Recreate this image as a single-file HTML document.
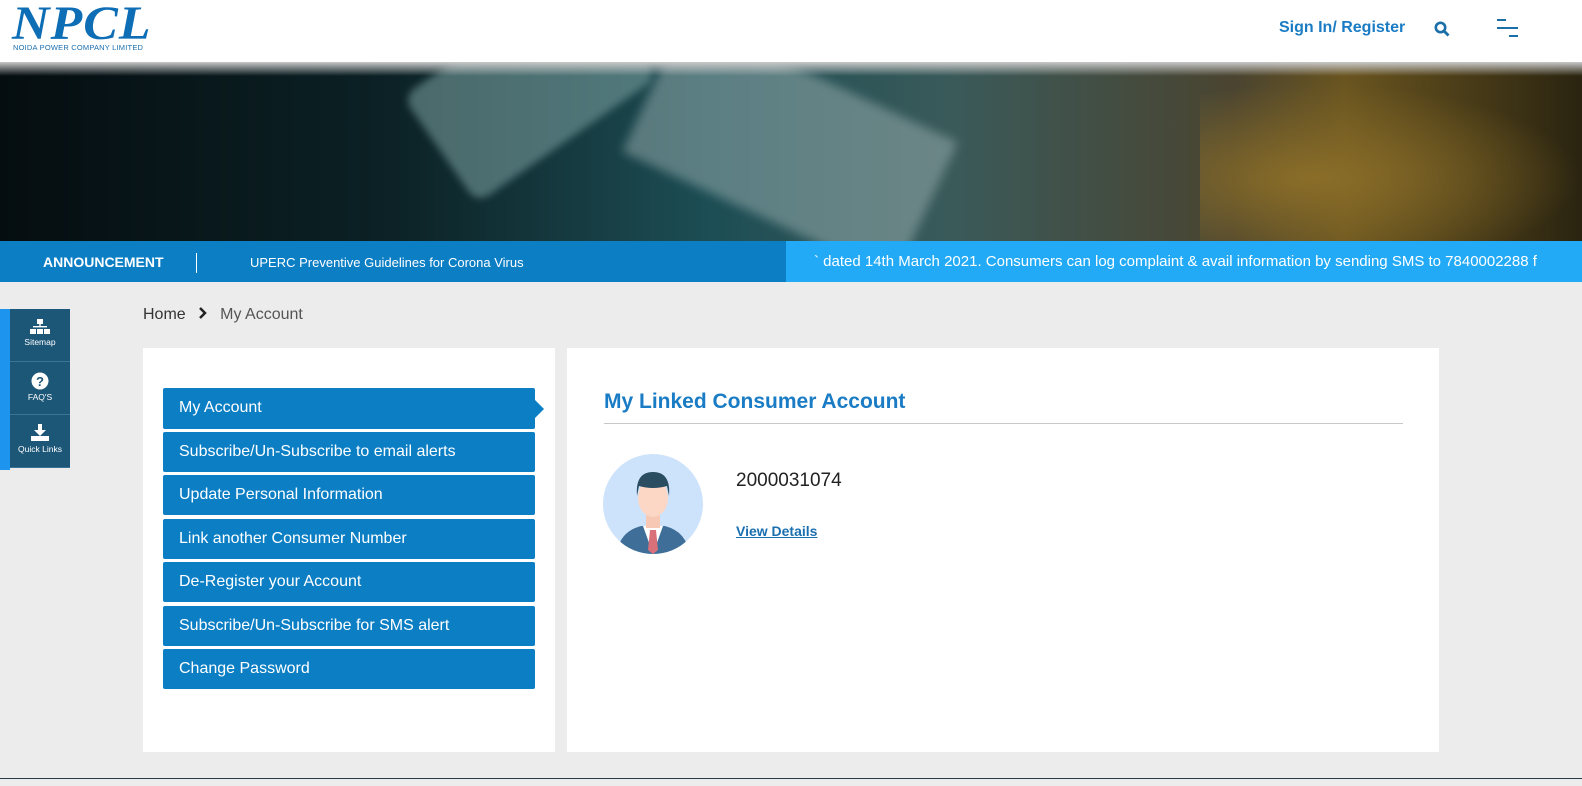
<!DOCTYPE html>
<html><head><meta charset="utf-8"><style>
*{margin:0;padding:0;box-sizing:border-box}
body{width:1582px;height:786px;overflow:hidden;background:#ececec;font-family:"Liberation Sans",sans-serif;position:relative}
.hdr{position:absolute;left:0;top:0;width:1582px;height:62px;background:#fff}
.logo{position:absolute;left:12px;top:2px;font-family:"Liberation Serif",serif;font-style:italic;font-weight:bold;font-size:48px;color:#0d6db5;letter-spacing:1px;line-height:44px;transform:scaleX(1.08);transform-origin:left}
.logosub{position:absolute;left:13px;top:43px;font-size:7.5px;color:#1a6fb0;letter-spacing:.2px}
.sign{position:absolute;left:1279px;top:19px;font-size:16px;color:#1a7cc4;font-weight:bold}
.banner{position:absolute;left:0;top:62px;width:1582px;height:179px;overflow:hidden;background:linear-gradient(90deg,#050d10 0%,#0c2226 25%,#1d4e55 45%,#3a5a5a 60%,#4a4430 78%,#6a5520 85%,#2a2410 100%)}
.ann{position:absolute;top:241px;height:41px;left:0;width:786px;background:#0b7ec4;color:#fff}
.ann2{position:absolute;top:241px;height:41px;left:786px;width:796px;background:#22aaf7;color:#fff;font-size:15px;padding:12px 0 0 28px;white-space:nowrap;overflow:hidden}
.side{position:absolute;left:0;top:309px;width:70px;height:161px}
.side .bar{position:absolute;left:0;top:0;width:10px;height:161px;background:#1d94ee}
.side .it{position:absolute;left:10px;width:60px;height:53px;background:#1d5778;color:#fff;font-size:8.5px;text-align:center;border-bottom:1px solid #3a7396}
.crumb{position:absolute;left:143px;top:306px;font-size:16px;color:#333}
.lp{position:absolute;left:143px;top:348px;width:412px;height:404px;background:#fff}
.rp{position:absolute;left:567px;top:348px;width:872px;height:404px;background:#fff}
.btn{position:absolute;left:20px;width:372px;height:40px;background:#0b7ec4;color:#fff;font-size:16px;padding:11px 0 0 16px;border-radius:2px}
</style></head><body>
<div class="hdr">
<div class="logo">NPCL</div>
<div class="logosub">NOIDA POWER COMPANY LIMITED</div>
<div class="sign">Sign In/ Register</div>
<svg style="position:absolute;left:1434px;top:21px" width="16" height="16"><circle cx="6.5" cy="6.5" r="4.7" fill="none" stroke="#1a6fa8" stroke-width="2.6"/><line x1="10" y1="10" x2="14.5" y2="14.5" stroke="#1a6fa8" stroke-width="2.8"/></svg>
<div style="position:absolute;left:1497px;top:19px;width:9px;height:2px;background:#1a6fa8"></div>
<div style="position:absolute;left:1497px;top:27px;width:21px;height:2px;background:#1a6fa8"></div>
<div style="position:absolute;left:1509px;top:35px;width:9px;height:2px;background:#1a6fa8"></div>
</div>
<div class="banner">
<div style="position:absolute;left:420px;top:-40px;width:220px;height:130px;background:#7ea3a3;transform:rotate(-35deg);border-radius:14px;opacity:.55;filter:blur(4px)"></div>
<div style="position:absolute;left:640px;top:10px;width:300px;height:150px;background:#a9bcbc;transform:rotate(25deg);opacity:.45;filter:blur(5px)"></div>
<div style="position:absolute;left:1200px;top:20px;width:382px;height:160px;background:radial-gradient(ellipse at 30% 60%,#8a6d28,rgba(0,0,0,0) 70%)"></div>
<div style="position:absolute;left:0;top:0;width:1582px;height:14px;background:linear-gradient(#c8c8c8,rgba(0,0,0,0))"></div>
</div>
<div class="ann">
<div style="position:absolute;left:43px;top:13px;font-size:14px;font-weight:bold">ANNOUNCEMENT</div>
<div style="position:absolute;left:196px;top:12px;width:1px;height:20px;background:#fff"></div>
<div style="position:absolute;left:250px;top:14px;font-size:13px">UPERC Preventive Guidelines for Corona Virus</div>
</div>
<div class="ann2">` dated 14th March 2021. Consumers can log complaint &amp; avail information by sending SMS to 7840002288 f</div>
<div class="side"><div class="bar"></div>
<div class="it" style="top:0"><svg style="margin-top:10px" width="20" height="16"><rect x="7" y="0" width="6" height="5" fill="#fff"/><rect x="9.3" y="5" width="1.4" height="3" fill="#fff"/><rect x="3" y="7" width="14" height="1.4" fill="#fff"/><rect x="0" y="10" width="6" height="5" fill="#fff"/><rect x="7" y="10" width="6" height="5" fill="#fff"/><rect x="14" y="10" width="6" height="5" fill="#fff"/></svg><div>Sitemap</div></div>
<div class="it" style="top:53px"><svg style="margin-top:10px" width="18" height="18"><circle cx="9" cy="9" r="8.5" fill="#fff"/><text x="9" y="14" text-anchor="middle" font-size="13" font-weight="bold" fill="#1d5778" font-family="Liberation Sans">?</text></svg><div>FAQ'S</div></div>
<div class="it" style="top:106px"><svg style="margin-top:9px" width="20" height="18"><rect x="8" y="0" width="4" height="7" fill="#fff"/><polygon points="4,6 16,6 10,12" fill="#fff"/><rect x="1" y="12" width="18" height="5" fill="#fff"/></svg><div>Quick Links</div></div>
</div>
<div class="crumb">Home <svg style="margin:0 12px 0 8px;vertical-align:-1px" width="10" height="14"><path d="M2 2 L7 7 L2 12" fill="none" stroke="#222" stroke-width="2.5"/></svg><span style="color:#555">My Account</span></div>
<div class="lp">
<div class="btn" style="top:40px;height:41px">My Account</div>
<div style="position:absolute;left:392px;top:52px;border-left:9px solid #0b7ec4;border-top:9px solid transparent;border-bottom:9px solid transparent"></div>
<div class="btn" style="top:84px">Subscribe/Un-Subscribe to email alerts</div>
<div class="btn" style="top:127px">Update Personal Information</div>
<div class="btn" style="top:171px">Link another Consumer Number</div>
<div class="btn" style="top:214px">De-Register your Account</div>
<div class="btn" style="top:258px">Subscribe/Un-Subscribe for SMS alert</div>
<div class="btn" style="top:301px">Change Password</div>
</div>
<div class="rp">
<div style="position:absolute;left:37px;top:42px;font-size:21px;color:#1a7cc4;font-weight:bold">My Linked Consumer Account</div>
<div style="position:absolute;left:37px;top:75px;width:799px;height:1px;background:#c8c8c8"></div>
<svg style="position:absolute;left:36px;top:106px" width="100" height="100"><defs><clipPath id="c"><circle cx="50" cy="50" r="50"/></clipPath></defs><circle cx="50" cy="50" r="50" fill="#cde3fb"/><g clip-path="url(#c)"><path d="M14 100 Q16 78 38 72 L62 72 Q84 78 86 100Z" fill="#3f6f98"/><path d="M40 72 L50 100 L60 72Z" fill="#fff"/><path d="M47 76 L53 76 L55 96 L50 100 L45 96Z" fill="#d9707a"/><rect x="43" y="58" width="14" height="16" fill="#f7c9b4"/><ellipse cx="50" cy="44" rx="15" ry="19" fill="#fcd7c5"/><path d="M34 42 Q32 18 50 18 Q68 18 66 42 L64 32 Q50 36 36 32Z" fill="#2a4d62"/></g></svg>
<div style="position:absolute;left:169px;top:122px;font-size:19px;color:#222">2000031074</div>
<div style="position:absolute;left:169px;top:175px;font-size:14px;color:#1a6fb0;font-weight:bold;text-decoration:underline">View Details</div>
</div>
<div style="position:absolute;left:0;top:778px;width:1582px;height:8px;background:#ececec;border-top:1px solid #2a3a4a"></div>
</body></html>
